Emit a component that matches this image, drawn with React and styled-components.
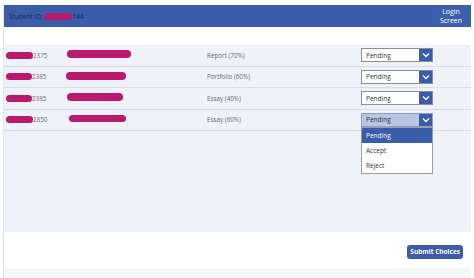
import React from "react";
import styled, {createGlobalStyle} from "styled-components";

const rows = [
  {id: '2375', idBlob: 27, nameBlob: 64, nameOffset: 0, task: 'Report (70%)'},
  {id: '2385', idBlob: 26, nameBlob: 60, nameOffset: -1, task: 'Portfolio (60%)'},
  {id: '2385', idBlob: 26, nameBlob: 56, nameOffset: 0, task: 'Essay (40%)'},
  {id: '2850', idBlob: 27, nameBlob: 57, nameOffset: 2, task: 'Essay (60%)', open: true},
]

const options = ['Pending', 'Accept', 'Reject']

const Chevron = () => (
  <svg width="8" height="6" viewBox="0 0 8 6">
    <path d="M1 1.5 L4 4.5 L7 1.5" fill="none" stroke="#fff" strokeWidth="1.3"/>
  </svg>
)

const App = () => {
  return (
    <>
      <GlobalStyle/>
      <Page>
        <Header>
          <StudentId>
            Student ID: <Blob $w={28} $h={7}/>144
          </StudentId>
          <LoginButton>Login<br/>Screen</LoginButton>
        </Header>
        <Gap/>
        <Panel>
          {rows.map((row, i) => (
            <Row key={i}>
              <IdCell>
                <Blob $w={row.idBlob} $h={7}/>{row.id}
              </IdCell>
              <div>
                <Blob $w={row.nameBlob} $h={row.open ? 7 : 8} style={{marginLeft: row.nameOffset}}/>
              </div>
              <Task>{row.task}</Task>
              <Dropdown>
                <Select $open={row.open}>
                  <span>Pending</span>
                  <ChevronBox><Chevron/></ChevronBox>
                </Select>
                {row.open && (
                  <Menu>
                    {options.map((o, k) => (
                      <Option key={o} $active={k === 0}>{o}</Option>
                    ))}
                  </Menu>
                )}
              </Dropdown>
            </Row>
          ))}
        </Panel>
        <Footer>
          <SubmitButton>Submit Choices</SubmitButton>
        </Footer>
      </Page>
    </>
  )
}

export default App;

const GlobalStyle = createGlobalStyle`
  html, body {
    margin: 0;
    padding: 0;
    background: #fff;
  }
  body {
    font-family: "Open Sans", "Noto Sans", sans-serif;
    width: 474px;
    height: 278px;
    overflow: hidden;
  }
`

const Page = styled.div`
  width: 467px;
  height: 273px;
  margin: 5px 0 0 3px;
  display: flex;
  flex-direction: column;
  background: #f7f7f8;
  border-left: 1px solid #e4e5e8;
`

const Header = styled.div`
  height: 22px;
  flex-shrink: 0;
  background: #3a5ca9;
  display: flex;
  align-items: center;
  justify-content: space-between;
`

const StudentId = styled.div`
  padding-left: 5px;
  font-size: 6.5px;
  color: #1e2d55;
  display: flex;
  align-items: center;
  white-space: pre;
`

const LoginButton = styled.div`
  width: 38px;
  height: 22px;
  display: flex;
  align-items: center;
  justify-content: center;
  text-align: center;
  background: #3d60ad;
  color: #fff;
  font-size: 7px;
  line-height: 9px;
  margin-right: 1px;
`

const Gap = styled.div`
  height: 18px;
  flex-shrink: 0;
  background: #fff;
`

const Panel = styled.div`
  height: 187px;
  flex-shrink: 0;
  background: #eff2f8;
`

const Row = styled.div`
  height: 20.5px;
  display: grid;
  grid-template-columns: 61px 140px 154px 72px;
  align-items: center;
  padding-left: 2px;
  border-bottom: 1px solid #d8dce3;
  font-size: 6.3px;
  color: #6a6e75;
`

const IdCell = styled.div`
  display: flex;
  align-items: center;
`

const Blob = styled.span`
  display: inline-block;
  width: ${p => p.$w}px;
  height: ${p => p.$h}px;
  border-radius: ${p => p.$h}px;
  background: #b91a6c;
`

const Task = styled.div`
  color: #6a6e75;
`

const Dropdown = styled.div`
  position: relative;
  width: 72px;
`

const Select = styled.div`
  height: 14px;
  display: flex;
  align-items: stretch;
  border: 1px solid ${p => p.$open ? '#8e9dc2' : '#8a8d93'};
  box-sizing: border-box;
  background: ${p => p.$open ? '#b7c5e3' : '#fff'};
  font-size: 6.5px;
  color: #333;

  >span {
    flex: 1;
    display: flex;
    align-items: center;
    padding-left: 4px;
  }
`

const ChevronBox = styled.div`
  width: 13px;
  background: #3a5ca9;
  display: flex;
  align-items: center;
  justify-content: center;
`

const Menu = styled.div`
  position: absolute;
  top: 14px;
  left: 0;
  width: 72px;
  box-sizing: border-box;
  background: #fff;
  border: 1px solid #9a9ca1;
  z-index: 2;
`

const Option = styled.div`
  height: 15px;
  display: flex;
  align-items: center;
  padding-left: 4px;
  font-size: 6.5px;
  background: ${p => p.$active ? '#3a5ca9' : '#fff'};
  color: ${p => p.$active ? '#fff' : '#333'};
`

const Footer = styled.div`
  height: 36px;
  flex-shrink: 0;
  background: #fff;
  display: flex;
  align-items: center;
  justify-content: flex-end;
  padding-right: 8px;
`

const SubmitButton = styled.div`
  height: 14px;
  padding: 0 3px;
  display: flex;
  align-items: center;
  background: #3a5ca9;
  border-radius: 3px;
  color: #fff;
  font-size: 6.5px;
  font-weight: 700;
  margin-top: 3px;
`
